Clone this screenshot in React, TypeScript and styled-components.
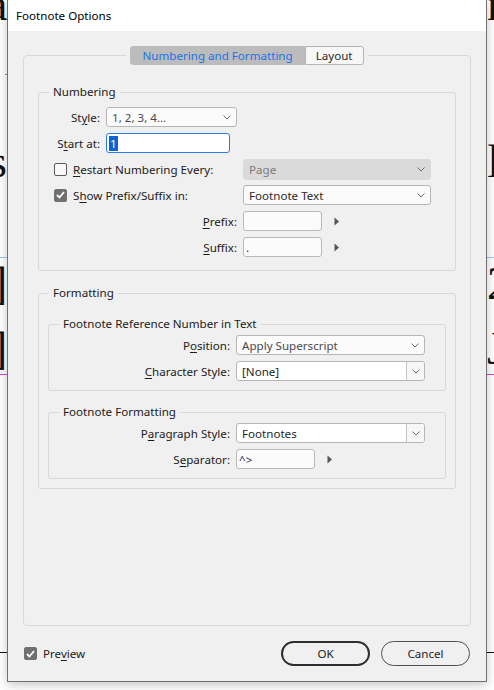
import React from 'react';
import styled, { createGlobalStyle } from 'styled-components';

const GlobalStyle = createGlobalStyle`
  html, body {
    margin: 0;
    padding: 0;
  }
  body {
    width: 494px;
    height: 690px;
    overflow: hidden;
    background: #ffffff;
    font-family: "Noto Sans", "Open Sans", sans-serif;
  }
`;

const Screen = styled.div`
  position: relative;
  width: 494px;
  height: 690px;
  overflow: hidden;
  background: #ffffff;
`;

/* document page behind the dialog */
const Page = styled.div`
  display: flex;
  flex-direction: column;
  font-family: "Liberation Serif", "DejaVu Serif", serif;
  font-size: 46px;
  color: #111;
`;

const DocLine = styled.div<{ $gap: number }>`
  display: flex;
  justify-content: space-between;
  height: 46px;
  line-height: 46px;
  margin-top: ${p => p.$gap}px;
`;

const Glyph = styled.span<{ $left?: number; $right?: number }>`
  margin-left: ${p => p.$left ?? 0}px;
  margin-right: ${p => p.$right ?? 0}px;
`;

const Guide = styled.div<{ $gap: number; $color: string }>`
  height: 1px;
  margin-top: ${p => p.$gap}px;
  background: ${p => p.$color};
`;

const Dialog = styled.div`
  position: absolute;
  left: 7px;
  top: 0;
  width: 480px;
  height: 682px;
  box-sizing: border-box;
  display: flex;
  flex-direction: column;
  border: 1px solid #707070;
  border-top: none;
  background: #f0f0f0;
  box-shadow: 0 3px 10px rgba(0, 0, 0, 0.22);
  color: #1b1b1b;
  font-size: 11.6px;
`;

const TitleBar = styled.div`
  height: 31px;
  flex-shrink: 0;
  display: flex;
  align-items: center;
  padding-left: 8px;
  background: #ffffff;
  color: #000;
`;

const Body = styled.div`
  flex: 1;
  display: flex;
  flex-direction: column;
  padding: 15px 15px 0 15px;
`;

const TabPanel = styled.fieldset`
  flex: 1;
  margin: 0;
  padding: 19px 14px 0 14px;
  border: 1px solid #d8d8d8;
  border-radius: 4px;
  min-width: 0;
`;

const TabStrip = styled.legend`
  display: flex;
  margin: 0 auto;
  padding: 0 4px;
`;

const Tab = styled.div<{ $active?: boolean }>`
  height: 19px;
  box-sizing: border-box;
  display: flex;
  align-items: center;
  padding: 0 ${p => (p.$active ? 11 : 10)}px;
  color: ${p => (p.$active ? '#1a73e8' : '#2a2a2a')};
  background: ${p => (p.$active ? '#bcbcbc' : '#f7f7f7')};
  border: 1px solid ${p => (p.$active ? '#bcbcbc' : '#b5b5b5')};
  border-radius: ${p => (p.$active ? '3px 0 0 3px' : '0 3px 3px 0')};
`;

const Group = styled.fieldset<{ $gap?: number; $pad: string }>`
  margin: ${p => p.$gap ?? 0}px 0 0 0;
  padding: ${p => p.$pad};
  border: 1px solid #d8d8d8;
  border-radius: 3px;
  min-width: 0;
  display: flex;
  flex-direction: column;
  gap: 6px;
`;

const Legend = styled.legend<{ $shift?: number }>`
  margin-left: ${p => p.$shift ?? 10}px;
  padding: 0 4px;
  line-height: 16px;
  color: #1b1b1b;
`;

const Row = styled.div`
  display: flex;
  align-items: center;
  height: 20px;
  gap: 6px;
`;

const Label = styled.div<{ $w: number }>`
  width: ${p => p.$w}px;
  flex-shrink: 0;
  text-align: right;
  white-space: nowrap;
`;

const Key = styled.span`
  text-decoration: underline;
  text-underline-offset: 2px;
`;

const CheckLine = styled.label<{ $w?: number }>`
  display: flex;
  align-items: center;
  gap: 6px;
  width: ${p => (p.$w ? `${p.$w}px` : 'auto')};
  flex-shrink: 0;
  white-space: nowrap;
`;

const Box = styled.span<{ $checked?: boolean }>`
  width: 13px;
  height: 13px;
  box-sizing: border-box;
  border-radius: 2px;
  display: flex;
  align-items: center;
  justify-content: center;
  background: ${p => (p.$checked ? '#707070' : '#f8f8f8')};
  border: 1px solid ${p => (p.$checked ? '#707070' : '#5c5c5c')};
`;

const Select = styled.div<{ $w: number; $disabled?: boolean; $h?: number }>`
  width: ${p => p.$w}px;
  height: ${p => p.$h ?? 20}px;
  box-sizing: border-box;
  display: flex;
  align-items: center;
  justify-content: space-between;
  padding: 0 5px 0 5px;
  border-radius: 3px;
  border: 1px solid ${p => (p.$disabled ? '#dadada' : '#b6b6b6')};
  background: ${p => (p.$disabled ? '#dadada' : '#fbfbfb')};
  color: ${p => (p.$disabled ? '#7a7a7a' : '#2a2a2a')};
  white-space: nowrap;
`;

const Value = styled.span<{ $dim?: boolean }>`
  color: ${p => (p.$dim ? '#4a4a4a' : 'inherit')};
`;

const Combo = styled.div`
  width: 189px;
  height: 20px;
  box-sizing: border-box;
  display: flex;
  border: 1px solid #b6b6b6;
  border-radius: 3px;
  background: #ffffff;
  overflow: hidden;
`;

const ComboText = styled.div`
  flex: 1;
  display: flex;
  align-items: center;
  padding-left: 5px;
  color: #1f1f1f;
`;

const ComboButton = styled.div`
  width: 17px;
  display: flex;
  align-items: center;
  justify-content: center;
  border-left: 1px solid #c6c6c6;
  background: #f7f7f7;
`;

const Field = styled.div<{ $w: number; $focus?: boolean }>`
  width: ${p => p.$w}px;
  height: 20px;
  box-sizing: border-box;
  display: flex;
  align-items: center;
  padding-left: 2px;
  border-radius: 3px;
  border: 1px solid ${p => (p.$focus ? '#2c7be5' : '#b9b9b9')};
  background: ${p => (p.$focus ? '#ffffff' : '#fbfbfb')};
  color: #1b2a5a;
`;

const Selected = styled.span`
  background: #0a64d2;
  color: #ffffff;
  padding: 0 1px;
  line-height: 15px;
`;

const Arrow = styled.svg`
  margin-left: 6px;
`;

const Footer = styled.div`
  height: 25px;
  margin: 15px 1px;
  display: flex;
  align-items: center;
`;

const Spacer = styled.div`
  flex: 1;
`;

const Button = styled.button<{ $primary?: boolean }>`
  width: 89px;
  height: 25px;
  margin-left: 11px;
  box-sizing: border-box;
  border-radius: 13px;
  border: ${p => (p.$primary ? '2px solid #2e2e2e' : '1px solid #505050')};
  background: transparent;
  font-family: inherit;
  font-size: 11.6px;
  color: #222;
`;

const Chevron = () => (
  <svg width="8" height="5" viewBox="0 0 8 5">
    <polyline points="0.5,0.5 4,4 7.5,0.5" fill="none" stroke="#6a6a6a" strokeWidth="1" />
  </svg>
);

const Check = () => (
  <svg width="9" height="8" viewBox="0 0 9 8">
    <polyline points="1,4 3.5,6.5 8,1" fill="none" stroke="#ffffff" strokeWidth="1.8" />
  </svg>
);

const More = () => (
  <Arrow width="6" height="9" viewBox="0 0 6 9">
    <polygon points="0.5,0.5 5,4.5 0.5,8.5" fill="#555" />
  </Arrow>
);

export default function App() {
  return (
    <Screen>
      <GlobalStyle />
      <Page>
        <DocLine $gap={-18}>
          <Glyph $left={-13}>a</Glyph>
          <Glyph $right={-16}>n</Glyph>
        </DocLine>
        <Guide $gap={46} $color="#5b8fe0" style={{ width: 4, marginLeft: 5 }} />
        <DocLine $gap={64}>
          <Glyph $left={-11}>s</Glyph>
          <Glyph $right={-6}>l</Glyph>
        </DocLine>
        <Guide $gap={72} $color="#a9c4ec" />
        <DocLine $gap={3}>
          <Glyph $left={-8}>]</Glyph>
          <Glyph $right={-16}>2</Glyph>
        </DocLine>
        <DocLine $gap={19}>
          <Glyph $left={-8}>]</Glyph>
          <Glyph $right={-11}>J</Glyph>
        </DocLine>
        <Guide $gap={2} $color="#e040e0" />
        <Guide $gap={277} $color="#111" />
      </Page>

      <Dialog>
        <TitleBar>Footnote Options</TitleBar>
        <Body>
          <TabPanel>
            <TabStrip>
              <Tab $active>Numbering and Formatting</Tab>
              <Tab>Layout</Tab>
            </TabStrip>

            <Group $pad="7px 15px 13px 15px">
              <Legend $shift={-5}>Numbering</Legend>
              <Row>
                <Label $w={46}>
                  St<Key>y</Key>le:
                </Label>
                <Select $w={131}>
                  <Value $dim>1, 2, 3, 4...</Value>
                  <Chevron />
                </Select>
              </Row>
              <Row>
                <Label $w={46}>
                  S<Key>t</Key>art at:
                </Label>
                <Field $w={124} $focus>
                  <Selected>1</Selected>
                </Field>
              </Row>
              <Row>
                <CheckLine $w={183}>
                  <Box />
                  <span>
                    <Key>R</Key>estart Numbering Every:
                  </span>
                </CheckLine>
                <Select $w={188} $disabled $h={21}>
                  <span>Page</span>
                  <Chevron />
                </Select>
              </Row>
              <Row>
                <CheckLine $w={183}>
                  <Box $checked>
                    <Check />
                  </Box>
                  <span>
                    S<Key>h</Key>ow Prefix/Suffix in:
                  </span>
                </CheckLine>
                <Select $w={188}>
                  <span>Footnote Text</span>
                  <Chevron />
                </Select>
              </Row>
              <Row>
                <Label $w={183}>
                  <Key>P</Key>refix:
                </Label>
                <Field $w={79} />
                <More />
              </Row>
              <Row>
                <Label $w={183}>
                  <Key>S</Key>uffix:
                </Label>
                <Field $w={79}>.</Field>
                <More />
              </Row>
            </Group>

            <Group $gap={14} $pad="15px 9px 9px 9px">
              <Legend $shift={1}>Formatting</Legend>
              <Group $pad="3px 0 9px 0">
                <Legend>Footnote Reference Number in Text</Legend>
                <Row>
                  <Label $w={181}>
                    P<Key>o</Key>sition:
                  </Label>
                  <Select $w={189}>
                    <Value $dim>Apply Superscript</Value>
                    <Chevron />
                  </Select>
                </Row>
                <Row>
                  <Label $w={181}>
                    <Key>C</Key>haracter Style:
                  </Label>
                  <Combo>
                    <ComboText>[None]</ComboText>
                    <ComboButton>
                      <Chevron />
                    </ComboButton>
                  </Combo>
                </Row>
              </Group>

              <Group $gap={7} $pad="3px 0 9px 0">
                <Legend>Footnote Formatting</Legend>
                <Row>
                  <Label $w={181}>
                    P<Key>a</Key>ragraph Style:
                  </Label>
                  <Combo>
                    <ComboText>Footnotes</ComboText>
                    <ComboButton>
                      <Chevron />
                    </ComboButton>
                  </Combo>
                </Row>
                <Row>
                  <Label $w={181}>
                    S<Key>e</Key>parator:
                  </Label>
                  <Field $w={79}>^&gt;</Field>
                  <More />
                </Row>
              </Group>
            </Group>
          </TabPanel>

          <Footer>
            <CheckLine>
              <Box $checked>
                <Check />
              </Box>
              <span>
                Pre<Key>v</Key>iew
              </span>
            </CheckLine>
            <Spacer />
            <Button $primary>OK</Button>
            <Button>Cancel</Button>
          </Footer>
        </Body>
      </Dialog>
    </Screen>
  );
}
